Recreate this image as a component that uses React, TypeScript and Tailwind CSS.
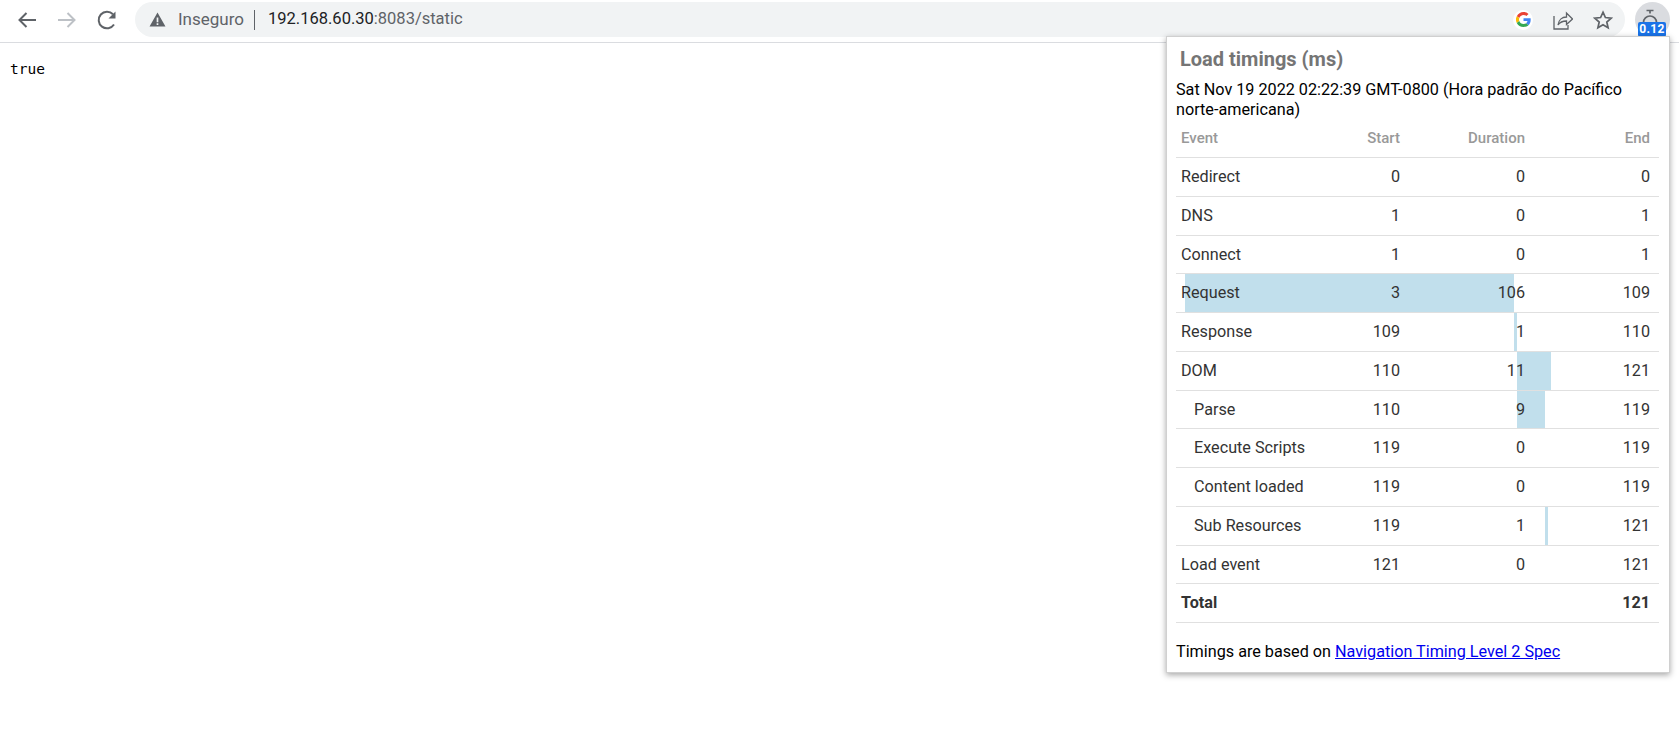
import { FC } from 'react';

interface Timing {
  label: string;
  start: number;
  duration: number;
  end: number;
  nested?: boolean;
  bar?: boolean;
}

const timings: Timing[] = [
  { label: 'Redirect', start: 0, duration: 0, end: 0 },
  { label: 'DNS', start: 1, duration: 0, end: 1 },
  { label: 'Connect', start: 1, duration: 0, end: 1 },
  { label: 'Request', start: 3, duration: 106, end: 109, bar: true },
  { label: 'Response', start: 109, duration: 1, end: 110, bar: true },
  { label: 'DOM', start: 110, duration: 11, end: 121, bar: true },
  { label: 'Parse', start: 110, duration: 9, end: 119, nested: true, bar: true },
  { label: 'Execute Scripts', start: 119, duration: 0, end: 119, nested: true },
  { label: 'Content loaded', start: 119, duration: 0, end: 119, nested: true },
  { label: 'Sub Resources', start: 119, duration: 1, end: 121, nested: true, bar: true },
  { label: 'Load event', start: 121, duration: 0, end: 121 },
];

const PX_PER_MS = 3.1;

const Row: FC<{ t: Timing }> = ({ t }) => (
  <div className="relative grid h-[38.75px] grid-cols-[124px_95px_125px_125px] items-center border-b border-[#e0e0e0] pt-px pr-[9px] pl-[5px] text-[16.200px] text-[#333]">
    {t.bar && (
      <div
        className="absolute top-0 bottom-0 bg-[#c1dfec]"
        style={{ left: t.start * PX_PER_MS, width: Math.max(t.duration * PX_PER_MS, 3) }}
      />
    )}
    <span className={`relative whitespace-nowrap ${t.nested ? 'pl-[13px]' : ''}`}>{t.label}</span>
    <span className="relative text-right">{t.start}</span>
    <span className="relative text-right">{t.duration}</span>
    <span className="relative text-right">{t.end}</span>
  </div>
);

const Toolbar: FC = () => (
  <div className="flex h-[43px] items-center border-b border-[#dadce0] bg-white pb-[3px]">
    <div className="flex w-[135px] shrink-0 items-center">
      <svg width="24" height="24" viewBox="0 0 24 24" className="ml-[15px]" fill="none" stroke="#5f6368" strokeWidth="2">
        <path d="M21 12H5M11.500 5 4.500 12l7 7" />
      </svg>
      <svg width="24" height="24" viewBox="0 0 24 24" className="ml-[16px]" fill="none" stroke="#bdc1c6" strokeWidth="2">
        <path d="M3 12h16M12.500 5l7 7-7 7" />
      </svg>
      <svg width="24" height="24" viewBox="0 0 24 24" className="ml-[16px]" fill="none" stroke="#5f6368" strokeWidth="2">
        <path d="M19 16.500A8.300 8.300 0 1 1 18 6.300" />
        <path d="M20.500 3.500v7h-7z" fill="#5f6368" stroke="none" />
      </svg>
    </div>
    <div className="flex h-[35px] w-[1490px] shrink-0 items-center rounded-full bg-[#f1f3f4] pl-[14px]">
      <svg width="17" height="17" viewBox="0 0 16 16" fill="#5f6368">
        <path d="M8 1.500 15.500 14.500H.5zM7.200 6v4.500h1.600V6zm0 5.500v1.600h1.600v-1.600z" fillRule="evenodd" />
      </svg>
      <span className="ml-[12px] text-[17px] text-[#5f6368]">Inseguro</span>
      <span className="ml-[10px] h-[20px] w-px bg-[#5f6368]" />
      <span className="ml-[13px] text-[16.500px] text-[#202124]">192.168.60.30</span>
      <span className="text-[16.500px] text-[#5f6368]">:8083/static</span>
      <div className="ml-auto flex items-center">
        <div className="flex h-[20px] w-[20px] items-center justify-center rounded-full bg-white">
          <svg width="15" height="15" viewBox="0 0 48 48">
            <path fill="#EA4335" d="M24 9.500c3.500 0 6.700 1.200 9.200 3.600l6.900-6.900C35.900 2.400 30.500 0 24 0 14.600 0 6.500 5.400 2.600 13.200l8 6.200C12.400 13.700 17.700 9.500 24 9.500z" />
            <path fill="#4285F4" d="M47 24.500c0-1.600-.1-3.100-.4-4.500H24v9h12.900c-.6 3-2.200 5.500-4.800 7.200l7.700 6c4.500-4.200 7.200-10.300 7.200-17.700z" />
            <path fill="#FBBC05" d="M10.500 28.600a14.500 14.500 0 0 1 0-9.200l-8-6.200a24 24 0 0 0 0 21.600z" />
            <path fill="#34A853" d="M24 48c6.500 0 11.900-2.100 15.900-5.800l-7.700-6c-2.200 1.400-4.900 2.300-8.200 2.300-6.300 0-11.600-4.200-13.500-9.900l-8 6.200C6.500 42.600 14.600 48 24 48z" />
          </svg>
        </div>
        <svg width="20" height="20" viewBox="0 0 20 20" className="ml-[20px]" fill="none" stroke="#5f6368" strokeWidth="1.300">
          <path d="M1 6v13h14v-4" />
          <path d="M5 15c.5-5 4-8 8.500-8V3L19.500 9l-6 5.500V11c-3.500 0-6.500 1-8.500 4z" />
        </svg>
        <svg width="20" height="20" viewBox="0 0 20 20" className="mr-[12px] ml-[20px]" fill="none" stroke="#5f6368" strokeWidth="1.700">
          <path d="M10 2.200l2.400 5.300 5.800.6-4.400 3.900 1.300 5.700-5.100-3-5.100 3 1.300-5.700-4.400-3.900 5.800-.6z" />
        </svg>
      </div>
    </div>
    <div className="relative ml-[10px] h-[35px] w-[35px] rounded-full bg-[#dadce0]">
      <svg width="16" height="15" viewBox="0 0 16 15" className="absolute top-[7px] left-[7px]" fill="none" stroke="#5f6368" strokeWidth="1.700">
        <path d="M4.500 1.500h7M8 1.500v3M1.500 13.500a6.500 6.500 0 0 1 13 0" />
      </svg>
      <span className="absolute top-[20px] left-[3px] h-[15px] w-[28px] rounded-[2px] bg-[#1a73e8] text-center text-[12px] leading-[15px] font-bold tracking-[0.4px] text-white">
        0.12
      </span>
    </div>
  </div>
);

const App: FC = () => (
  <div className="relative h-[730px] w-[1679px] overflow-hidden bg-white font-['Roboto',sans-serif]">
    <Toolbar />
    <p className="mt-[17px] ml-[10px] font-['DejaVu_Sans_Mono',monospace] text-[14.500px] leading-[18px] text-black">true</p>

    <div className="absolute top-[36px] left-[1166px] h-[637px] w-[504px] border border-[#d0d0d0] bg-white pr-[10px] pl-[9px] shadow-[0_2px_6px_rgba(0,0,0,0.35)]">
      <h1 className="mt-[12px] ml-[4px] text-[20px] leading-[21px] font-bold text-[#757575]">Load timings (ms)</h1>
      <p className="mt-[10px] text-[16.200px] leading-[20px] text-black">
        Sat Nov 19 2022 02:22:39 GMT-0800 (Hora padrão do Pacífico norte-americana)
      </p>
      <div className="grid h-[38px] grid-cols-[124px_95px_125px_125px] items-center border-b border-[#e0e0e0] pr-[9px] pl-[5px] text-[15px] font-medium text-[#999]">
        <span>Event</span>
        <span className="text-right">Start</span>
        <span className="text-right">Duration</span>
        <span className="text-right">End</span>
      </div>
      {timings.map((t) => (
        <Row key={t.label} t={t} />
      ))}
      <div className="grid h-[38.75px] grid-cols-[124px_95px_125px_125px] items-center border-b border-[#e0e0e0] pr-[9px] pl-[5px] text-[16.200px] font-bold text-[#333]">
        <span>Total</span>
        <span />
        <span />
        <span className="text-right">121</span>
      </div>
      <p className="mt-[19px] text-[16.200px] leading-[19px] text-black">
        Timings are based on{' '}
        <a href="#" className="text-[#0000ee] underline">
          Navigation Timing Level 2 Spec
        </a>
      </p>
    </div>
  </div>
);

export default App;
